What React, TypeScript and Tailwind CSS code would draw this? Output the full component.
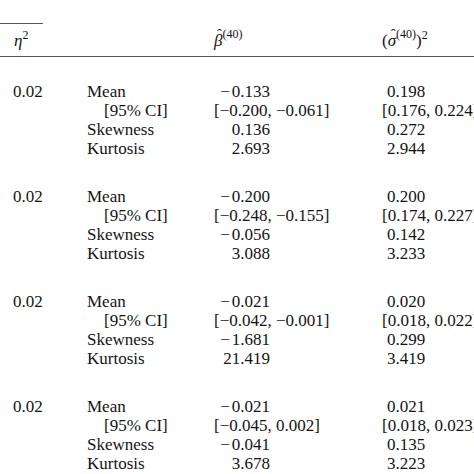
const BLOCKS = [
  {
    eta: "0.02",
    beta: { mean: "−0.133", ci: "[−0.200, −0.061]", skew: "0.136", kurt: "2.693" },
    sigma: { mean: "0.198", ci: "[0.176, 0.224]", skew: "0.272", kurt: "2.944" },
  },
  {
    eta: "0.02",
    beta: { mean: "−0.200", ci: "[−0.248, −0.155]", skew: "−0.056", kurt: "3.088" },
    sigma: { mean: "0.200", ci: "[0.174, 0.227]", skew: "0.142", kurt: "3.233" },
  },
  {
    eta: "0.02",
    beta: { mean: "−0.021", ci: "[−0.042, −0.001]", skew: "−1.681", kurt: "21.419" },
    sigma: { mean: "0.020", ci: "[0.018, 0.022]", skew: "0.299", kurt: "3.419" },
  },
  {
    eta: "0.02",
    beta: { mean: "−0.021", ci: "[−0.045, 0.002]", skew: "−0.041", kurt: "3.678" },
    sigma: { mean: "0.021", ci: "[0.018, 0.023]", skew: "0.135", kurt: "3.223" },
  },
];

function Num({ v }: { v: string }) {
  const neg = v.startsWith("−");
  return (
    <span className="inline-block w-[56px] text-right">
      {neg && <span className="pr-[2px]">−</span>}
      {neg ? v.slice(1) : v}
    </span>
  );
}

// greek letter with a hat accent on top
function Hat({ ch }: { ch: string }) {
  return (
    <span className="relative inline-block italic">
      {ch}
      <span className="absolute left-[3px] -top-[6px] not-italic text-[15px]">ˆ</span>
    </span>
  );
}

function Row({
  first,
  label,
  indent,
  beta,
  sigma,
  ci,
}: {
  first?: string;
  label: string;
  indent?: boolean;
  beta: string;
  sigma: string;
  ci?: boolean;
}) {
  return (
    <div className="flex h-[19px] whitespace-nowrap">
      <div className="w-[87px] shrink-0 pl-[13px]">{first}</div>
      <div className={`w-[127px] shrink-0 ${indent ? "pl-[17px]" : ""}`}>{label}</div>
      <div className="w-[168px] shrink-0">{ci ? beta : <Num v={beta} />}</div>
      <div className={ci ? "" : "pl-[5px]"}>{sigma}</div>
    </div>
  );
}

export default function App() {
  return (
    <div
      className="w-[474px] h-[474px] overflow-hidden bg-white text-[#141414] text-[17px] leading-[19px]"
      style={{ fontFamily: '"Liberation Serif", "Times New Roman", serif' }}
    >
      <div className="mt-[23px] w-[43px] h-px bg-[#555]" />

      {/* header */}
      <div className="flex h-[32px] pt-[7px] whitespace-nowrap">
        <div className="w-[87px] shrink-0 pl-[14px]">
          <span className="italic">η</span>
          <sup className="text-[12px] -top-[7px]">2</sup>
        </div>
        <div className="w-[127px] shrink-0" />
        <div className="w-[168px] shrink-0">
          <Hat ch="β" />
          <sup className="text-[12px] -top-[8px]">(40)</sup>
        </div>
        <div>
          (<Hat ch="σ" />
          <sup className="text-[12px] -top-[8px]">(40)</sup>)
          <sup className="text-[12px] -top-[7px]">2</sup>
        </div>
      </div>

      <div className="w-full h-px bg-[#555]" />

      <div className="pt-[25px] flex flex-col gap-[29px]">
        {BLOCKS.map((b, i) => (
          <div key={i}>
            <Row first={b.eta} label="Mean" beta={b.beta.mean} sigma={b.sigma.mean} />
            <Row label="[95% CI]" indent ci beta={b.beta.ci} sigma={b.sigma.ci} />
            <Row label="Skewness" beta={b.beta.skew} sigma={b.sigma.skew} />
            <Row label="Kurtosis" beta={b.beta.kurt} sigma={b.sigma.kurt} />
          </div>
        ))}
      </div>
    </div>
  );
}
